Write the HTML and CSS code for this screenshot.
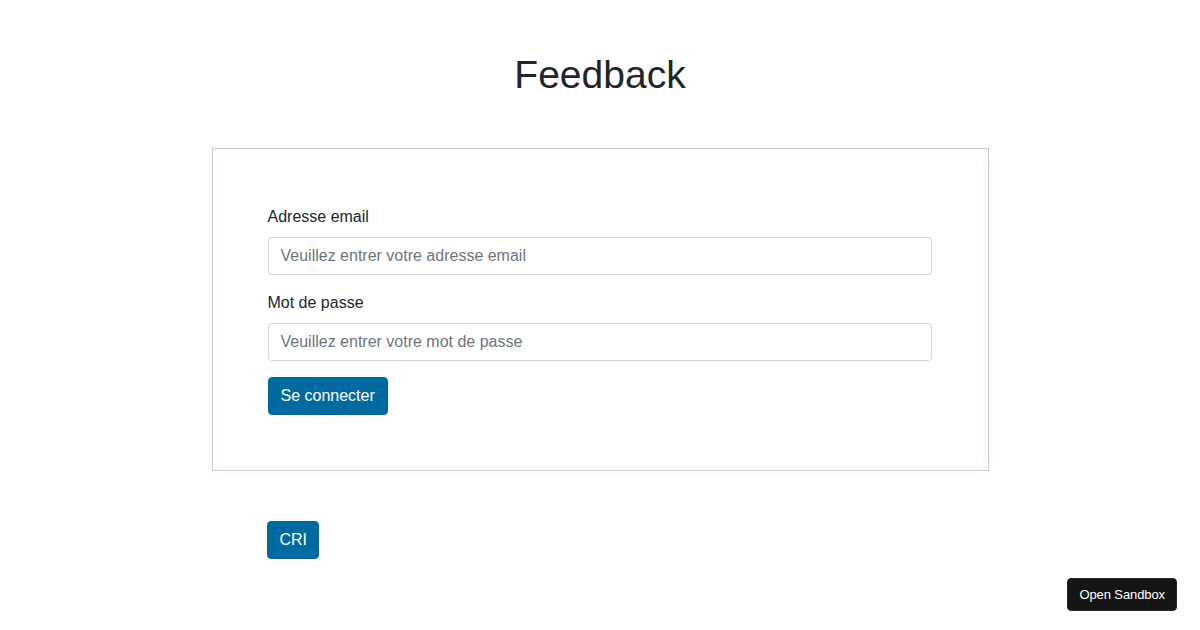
FILE: index.html
```html
<!DOCTYPE html>
<html lang="fr">
<head>
<meta charset="utf-8">
<title>Feedback</title>
<link rel="stylesheet" href="styles.css">
</head>
<body>
<main class="page">
  <h1 class="title">Feedback</h1>
  <section class="card">
    <form class="form">
      <div class="field">
        <label class="label" for="email">Adresse email</label>
        <input class="input" id="email" type="email" placeholder="Veuillez entrer votre adresse email">
      </div>
      <div class="field">
        <label class="label" for="pwd">Mot de passe</label>
        <input class="input" id="pwd" type="password" placeholder="Veuillez entrer votre mot de passe">
      </div>
      <div class="actions">
        <button class="btn" type="button">Se connecter</button>
      </div>
    </form>
  </section>
  <div class="footer-actions">
    <button class="btn btn-small" type="button">CRI</button>
  </div>
</main>
<button class="sandbox" type="button">Open Sandbox</button>
</body>
</html>
```

FILE: styles.css
```css
* { box-sizing: border-box; }
html, body { margin: 0; padding: 0; background: #fff; }
body {
  font-family: "Liberation Sans", Arial, sans-serif;
  color: #212529;
  font-size: 16px;
  line-height: 1.5;
  width: 1200px;
  height: 630px;
  overflow: hidden;
}
.page {
  display: flex;
  flex-direction: column;
  align-items: center;
  padding-top: 47px;
}
.title {
  margin: 0 0 45px;
  font-size: 39px;
  font-weight: 400;
  line-height: 56px;
  color: #212529;
}
.card {
  width: 777px;
  border: 1px solid #d9c2c8;
  padding: 56px 56px 55px 55px;
}
.form { display: flex; flex-direction: column; }
.field { display: flex; flex-direction: column; margin-bottom: 16px; }
.label {
  font-size: 16px;
  line-height: 24px;
  margin-bottom: 8px;
}
.input {
  height: 38px;
  width: 100%;
  border: 1px solid #ced4da;
  border-radius: 4px;
  padding: 6px 12px;
  font-family: inherit;
  font-size: 16px;
  color: #212529;
  background: #fff;
}
.input::placeholder { color: #6c757d; opacity: 1; }
.actions { display: flex; }
.btn {
  height: 38px;
  padding: 6px 12px;
  border: 1px solid #006aa0;
  background: #006aa0;
  color: #fff;
  border-radius: 4px;
  font-family: inherit;
  font-size: 16px;
  line-height: 24px;
}
.btn-small { padding: 6px 11px 6px 12px; }
.footer-actions {
  width: 777px;
  display: flex;
  padding-left: 55px;
  margin-top: 50px;
}
.sandbox {
  position: fixed;
  right: 23px;
  bottom: 19px;
  height: 33px;
  padding: 0 11px;
  background: #151515;
  color: #fff;
  border: 1px solid #2a2a2a;
  border-radius: 4px;
  font-family: "Liberation Sans", Arial, sans-serif;
  font-size: 13px;
  letter-spacing: -0.1px;
}
```
